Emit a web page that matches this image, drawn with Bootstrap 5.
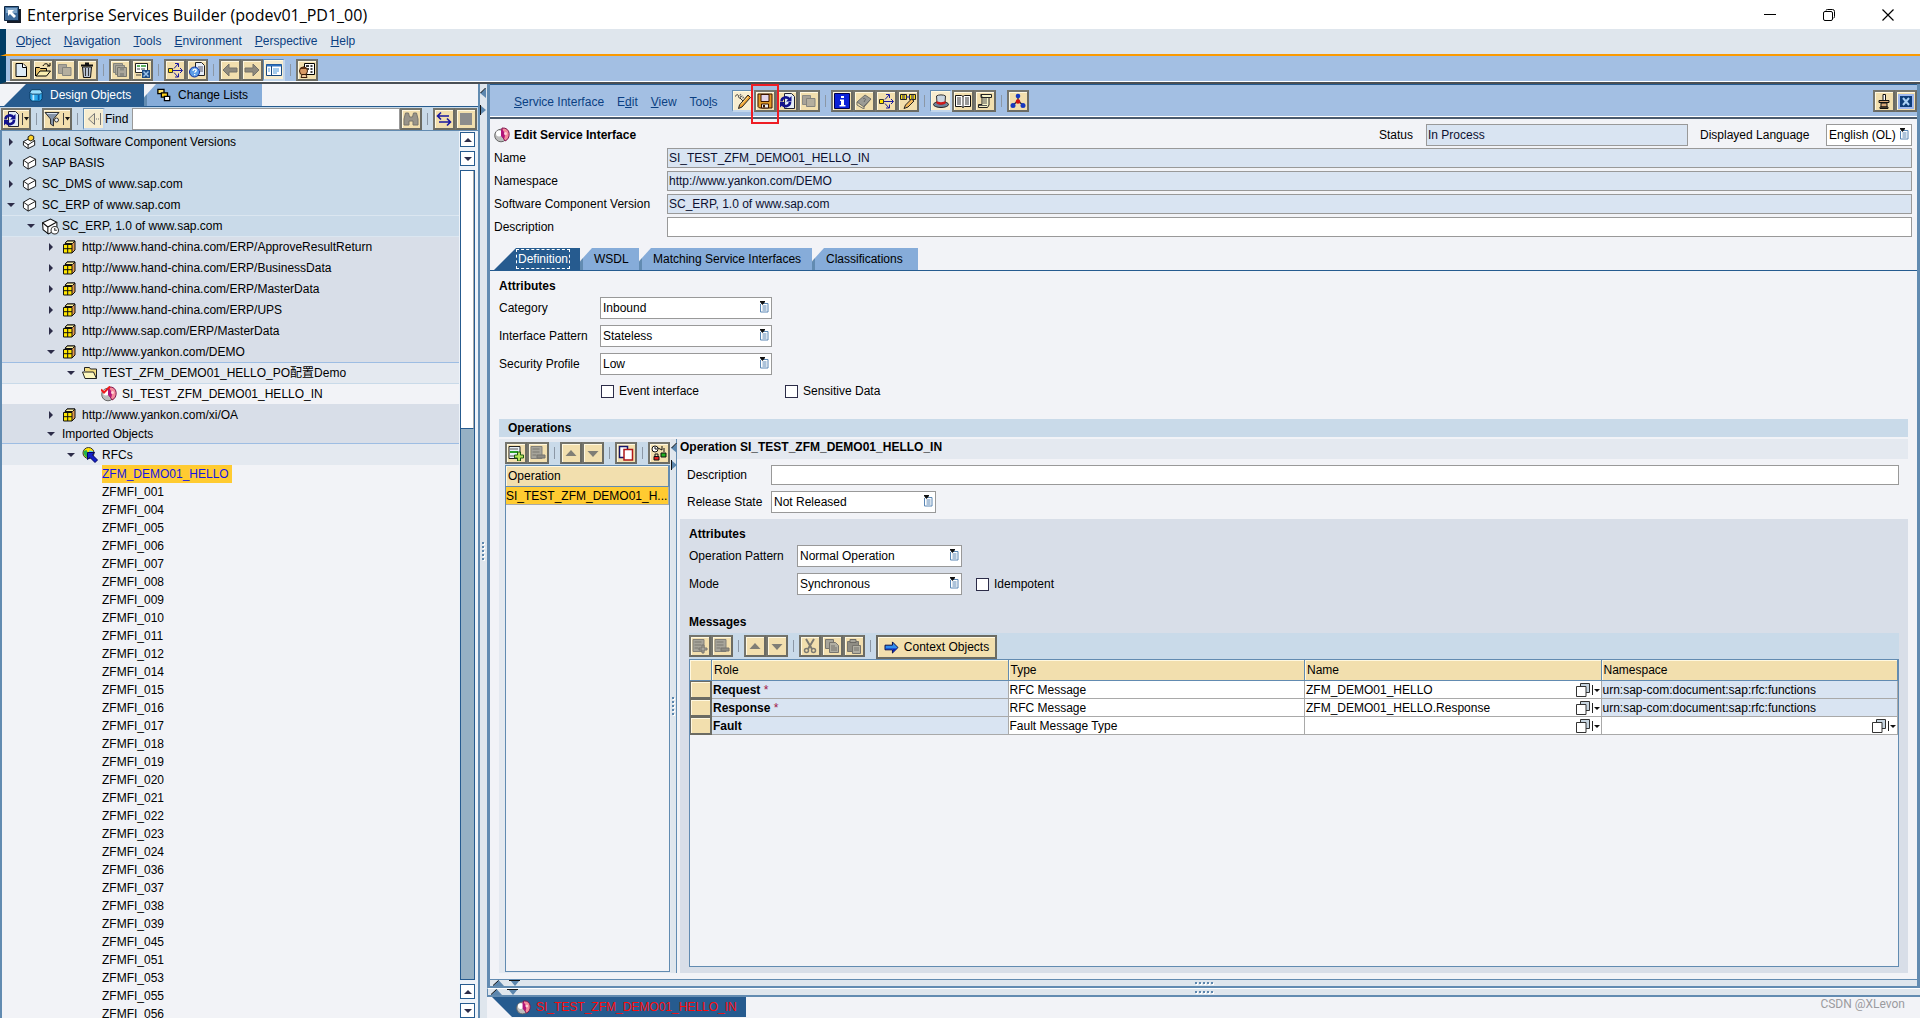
<!DOCTYPE html>
<html lang="en">
<head>
<meta charset="utf-8">
<meta name="viewport" content="width=device-width, initial-scale=1">
<title>Enterprise Services Builder</title>
<link href="https://cdn.jsdelivr.net/npm/bootstrap@5.3.0/dist/css/bootstrap.min.css" rel="stylesheet">
<style>
:root{--steel:#628bb1;--navy:#265b8f;--sky:#a3bfe3;--pale:#c9dae9;--mist:#dfe6ed;--paper:#f2f3f7;--fog:#e4e9f0;--dusk:#d8dee8;--sand:#f2dfae;--field:#d9e4f2}
body{font-family:"Liberation Sans","Noto Sans CJK SC",sans-serif;font-size:12px;line-height:16px;color:#000;background:var(--paper)}
svg{display:block;flex:none}
label,h2,h3{margin:0;font-size:12px;line-height:16px}
h2,h3{font-weight:700}
.titlebar{height:29px;background:#fff;padding:0 26px 0 4px}
.titlebar h1{font-family:"Open Sans",sans-serif;font-size:16px;line-height:24px;font-weight:400;margin:0 0 0 6px}
.wincontrols{gap:47px}
.wincontrols button{border:0;background:none;padding:0;width:12px;height:12px}
.menustrip{height:27px;background:var(--mist);border-left:6px solid #003c64;border-bottom:2px solid #fb9a02;padding:0 0 2px 10px;gap:13px}
.menulink{color:#0b3f82;text-decoration:none}
.menulink:hover{color:#000}
.mainbar{height:28px;background:var(--sky);border-left:6px solid #003c64;border-bottom:2px solid #4a4f55;box-shadow:inset 0 -1px #fff;padding:3px 0 0 4px;align-items:flex-start}
.tool{display:flex;align-items:center;justify-content:center;width:22px;height:22px;padding:0;border:2px solid #6b6b63;border-top-color:#75756d;border-left-color:#75756d;background:var(--sand);box-shadow:inset 1px 1px #fff8e0;flex:none}
.tool.wide{width:30px;gap:3px}
.tool.on{border-color:var(--steel) #c2d6ec #c2d6ec var(--steel);border-width:1px 2px 2px 1px;background:#f7edd0}
.tool:hover{background-color:#f9ebc5}
.rule{width:11px;height:22px;flex:none;display:flex;align-items:center;justify-content:center}
.rule::before{content:"";width:1px;height:12px;background:#8b97a5}
.sidepane{width:480px;flex:none;border-right:2px solid var(--steel)}
.tabstrip{display:flex;align-items:flex-end;border-bottom:1px solid var(--navy)}
.tabx{height:22px;border:0;padding:0;display:flex;align-items:center;gap:7px;color:#000;background:linear-gradient(to right,var(--steel) 3px,#86acd9 3px);clip-path:polygon(0 60%,12px 0,100% 0,100% 100%,0 100%)}
.tabx.current{color:#fff;background:var(--navy);clip-path:polygon(0 100%,22px 0,100% 0,100% 100%)}
.ring{outline:1px dashed #fff;outline-offset:1px}
.t-design{width:140px;padding-left:25px}.t-change{width:118px;padding-left:13px}
.t-def{width:86px;padding-left:24px}.t-wsdl{width:59px;padding-left:14px}.t-match{width:173px;padding-left:14px}.t-class{width:106px;padding-left:14px}
.sidebar-tools{height:24px;background:var(--pale);padding:1px 1px 0 1px;border-bottom:1px solid var(--steel)}
.treewrap{border-left:2px solid var(--steel)}
.tree{background:var(--paper);list-style:none;margin:0;padding:0;overflow:hidden}
.tree li{display:flex;align-items:center;height:21px;white-space:nowrap;background:var(--dusk)}
.tree .root{background:var(--pale)}
.tree .edge{border-top:1px solid #dbe6f0}
.tree .group{background:var(--fog);border-top:1px solid #9dbde3}
.tree .leaf{background:var(--paper);border-top:1px solid var(--pale)}
.tree .tight{height:18px}
.tree .tall{height:22px}
.tree .item{background:var(--paper);height:18px;padding-left:100px}
.l1{padding-left:20px}.l2{padding-left:40px}.l3{padding-left:60px}
.tree .leaf{padding-left:99px}
.twist{width:20px;flex:none;display:flex;justify-content:center;padding-right:3px}
.pic{width:20px;flex:none}
.leaf .pic{width:21px}
.picked{background:#ffcb31;color:#1414e6;padding:1px 3px 0 0;line-height:17px}
.vscroll{width:19px;background:#eef3f9;padding:1px 3px 0 1px;gap:4px;flex:none}
.vscroll button{width:15px;height:15px;border:1px solid var(--navy);background:#fff;padding:0;display:flex;align-items:center;justify-content:center;flex:none}
.track{border:1px solid var(--navy);background:#96b1c4}
.thumb{height:258px;background:#fff;border-bottom:1px solid var(--navy);border-right:1px solid #aaa}
.splitv{width:7px;background:var(--mist);flex:none}
.splitin{width:6px;background:var(--mist);border-right:1px solid var(--steel);flex:none}
.splitv,.splitin{position:relative;display:flex;align-items:center;justify-content:center}
.splitv .arrows,.splitin .arrows{position:absolute;left:0;top:4px}
.mainpane{border-left:3px solid var(--steel);border-right:3px solid var(--steel);background:var(--paper)}
.objbar{height:35px;background:var(--sky);border-top:1px solid var(--navy);border-bottom:2px solid #4a5a6c;box-shadow:inset 0 -1px #fff;padding:5px 0 0 24px}
.objmenu{gap:13px;height:24px;width:218px}
.redmark{position:absolute;left:-3px;top:-6px;width:28px;height:40px;border:2px solid #ee1c24;pointer-events:none;z-index:2}
.box{height:20px;border:1px solid #999;border-radius:0;background:#fff;padding:0 1px;font-size:12px;line-height:16px;color:#000;min-width:0}
.box.locked{background:var(--field);color:#0c1030}
.box.high{height:22px}
.drop{position:relative;height:22px}
.drop select{appearance:none;width:100%;height:22px;border:1px solid #999;border-radius:0;background:#fff;padding:0 14px 0 2px;font-size:12px;line-height:16px;color:#000}
.drop svg{position:absolute;right:3px;top:4px;pointer-events:none}
.head-form{padding:5px 5px 0 4px}
.head-form .line{display:flex;align-items:center;height:20px;margin-bottom:3px}
.head-form .first{height:22px;margin-bottom:2px}
.w-stat{width:47px}.w-statbox{width:262px}.w-lang{width:126px;margin-left:12px}.w-langbox{width:86px}
.lbl-a{width:173px}.lbl-b{width:101px}.lbl-c{width:84px}.lbl-d{width:108px}
.w-drop{width:172px}.w-drop2{width:165px}
.lower-tabs{margin-top:8px}
.defpane{padding:7px 9px 6px 9px}
.gap-s{margin-top:3px}.gap-m{margin-top:6px}.gap-l{margin-top:20px}
.ticks{padding-left:102px}
.tickbox{gap:5px}
.tickbox.first{width:184px}
.tickbox.side{margin-left:14px}
.tick{appearance:none;width:13px;height:13px;border:1px solid #2c2c48;background:#fff;margin:0;flex:none}
.tick:checked{background:#2c2c48}
.band{height:18px;background:var(--pale);padding:1px 9px}
.opsarea{background:var(--fog);margin-top:2px;padding-left:6px}
.oplist{width:166px;padding:3px 1px 1px 0;flex:none}
.opbar{background:var(--pale);height:23px}
.gridbox{border:1px solid var(--steel);background:var(--paper)}
.gridbox table{width:100%;table-layout:fixed;border-collapse:separate;border-spacing:0}
.gridbox th{height:21px;background:var(--sand);font-weight:400;padding:0 2px;border-bottom:1px solid var(--steel);border-right:1px solid var(--steel);box-shadow:inset 1px 1px #fff8e0}
.gridbox td{height:18px;padding:0 1px;border-bottom:1px solid #a9a9a9;border-right:1px solid #a9a9a9;background:#fff;white-space:nowrap;overflow:hidden;line-height:16px}
.gridbox td.ro{background:var(--field)}
.gridbox td.grip{background:var(--sand);border:2px solid #6b6b63;border-width:1px 2px 2px 1px;box-shadow:inset 1px 1px #fff8e0}
.gridbox td.chosen{background:#ffcb31;padding:0}
.gripcol{width:22px}
.star{color:#a01848}
.opdetail{background:var(--paper)}
.ophead{height:20px;background:var(--fog);padding:0 3px}
.opform{padding:6px 9px 6px 10px}
.duskpane{background:var(--dusk);padding:7px 9px 6px 9px;margin-left:3px}
.msghead{margin:19px 0 3px}
.msgbar{background:var(--pale);padding:2px 0;height:26px}
.ctxbtn{height:24px;width:121px;border:2px solid #6b6b63;background:var(--sand);box-shadow:inset 1px 1px #fff8e0;padding:0;display:flex;align-items:center;justify-content:center;gap:5px}
.splith{height:9px;background:var(--mist);border-top:1px solid #fff;border-bottom:2px solid var(--steel);padding-left:3px;display:flex;align-items:center;position:relative}
.splith.upper{border-top-color:var(--steel)}
.splith.lower{border-left:1px solid var(--steel)}
.splith .mid{position:absolute;left:50%;top:2px;margin-left:-10px}
.dock{padding-left:5px;height:21px}
.docktab{height:20px;width:254px;border:0;padding:0 0 0 24px;background:var(--navy);color:#ff0a0a;display:flex;align-items:center;gap:5px;clip-path:polygon(0 0,100% 0,100% 100%,20px 100%)}
.stamp{color:#9b9b9f;padding-right:15px;font-family:Roboto,sans-serif;font-size:12px;line-height:15px}
</style>
<script src="https://cdn.jsdelivr.net/npm/bootstrap@5.3.0/dist/js/bootstrap.bundle.min.js" defer></script>
</head>
<body class="d-flex flex-column vh-100 overflow-hidden">
<svg width="0" height="0" class="position-absolute" aria-hidden="true">
<defs>
<symbol id="new" viewBox="0 0 16 16"><path d="M3 1.500h7l3.500 3.500v9.500H3z" fill="#dceaf5" stroke="#000"/><path d="M9.500 1.500v4h4" fill="#fff" stroke="#000"/></symbol>
<symbol id="open" viewBox="0 0 16 16"><path d="M.5 14V5.500h4l1 1h6V9" fill="#e6c16a" stroke="#000"/><path d="M1 14l4-5h10.500l-4 5z" fill="#fbeeb0" stroke="#000"/><path d="M8 4c1-3 5-3 6 0m1-3v3h-3" fill="none" stroke="#000"/></symbol>
<symbol id="copyg" viewBox="0 0 16 16"><path d="M1.500 2.500h8v9h-8z" fill="#a8a398" stroke="#8b8b84"/><path d="M5.500 5.500h8.500v8H5.500z" fill="#b4ae9e" stroke="#84847e"/></symbol>
<symbol id="bin" viewBox="0 0 16 16"><path d="M3.500 5h9l-1 10.500h-7z" fill="#b9c3d2" stroke="#111"/><path d="M2 3.500h12M6 1.500h4" stroke="#111" stroke-width="2"/><path d="M6.500 6v8M9.500 6v8" stroke="#333"/></symbol>
<symbol id="saveall" viewBox="0 0 16 16"><path d="M1.500 1.500h9v9h-9z" fill="#aaa69b" stroke="#85857d"/><path d="M3.500 3.500h9v9h-9z" fill="#aaa69b" stroke="#85857d"/><path d="M5.500 5.500h9v9h-9z" fill="#aaa69b" stroke="#77776f"/><path d="M8 5.500h4v3H8zM8 11h4v3H8z" fill="#8b8b84"/></symbol>
<symbol id="listx" viewBox="0 0 16 16"><path d="M1.500 1.500h12v9h-12z" fill="#fff" stroke="#222"/><path d="M3 4h3m1 0h5" stroke="#2a9a2a" stroke-width="1.500"/><path d="M3 7h3m1 0h4M2 13h5" stroke="#444"/><path d="M8 8h8v8H8z" fill="#1d4d86"/><path d="M9.500 9.500l5 5m0-5l-5 5" stroke="#9cc3ea" stroke-width="1.500"/></symbol>
<symbol id="spread" viewBox="0 0 16 16"><path d="M1.500 6.500h4v4h-4z" fill="#ffe100" stroke="#333"/><path d="M6 8.500h9M13 6l2.500 2.500L13 11M7 6.500l4-4.500M8 1.500h3.500V5M7 10.500l4 4.500M8 15h3.500v-3.500" fill="none" stroke="#1a1aa0"/></symbol>
<symbol id="helpdoc" viewBox="0 0 16 16"><path d="M6.500.5h6l3 3v10h-9z" fill="#e6eef8" stroke="#222"/><path d="M9 5h5M10 7h4M11 9h3" stroke="#556"/><circle cx="5.500" cy="10" r="5" fill="#5c9ee8" stroke="#0e2fa0"/><path d="M4 9c0-2.500 3.500-2.500 3.200-.5-.2 1-1.500 1-1.500 2.300M5.700 12v1.300" fill="none" stroke="#fff" stroke-width="1.300"/></symbol>
<symbol id="back" viewBox="0 0 16 16"><path d="M1 8l6-6v4h8v4H7v4z" fill="#8e8a7e" stroke="#74726a"/></symbol>
<symbol id="fwd" viewBox="0 0 16 16"><path d="M15 8L9 2v4H1v4h8v4z" fill="#8e8a7e" stroke="#74726a"/></symbol>
<symbol id="panel" viewBox="0 0 16 16"><path d="M.5 2.500h15v11H.5z" fill="#fff" stroke="#17497f"/><path d="M.5 3.500h15" stroke="#2f72c0" stroke-width="2"/><path d="M5.500 4v9" stroke="#17497f"/><path d="M2 7h2M2 9h2M7 7h6M7 9h6M7 11h4" stroke="#4c9adb"/></symbol>
<symbol id="person" viewBox="0 0 16 16"><path d="M5.500 1.500h10v11h-10z" fill="#fff" stroke="#000"/><path d="M7 4h3M11.500 4h2M8 7h2M11.500 7h2M11.500 10h2" stroke="#000" stroke-width="1.500"/><circle cx="4.500" cy="9" r="4" fill="#d99a66" stroke="#3a1c08"/><path d="M1 7c1-3 6-3 7 0" fill="#5a2f12"/><path d="M2 15.500l1-3h4l1 3z" fill="#f2c9a0" stroke="#3a1c08"/></symbol>
<symbol id="db" viewBox="0 0 16 16"><path d="M3 2h10l2 4v6l-2 3H3l-2-3V6z" fill="#2aa7ea" stroke="#08365e"/><path d="M5 7v7" stroke="#bdeaff" stroke-width="2"/><path d="M3 2h10l2 3-2 2H3L1 5z" fill="#9ae0ff" stroke="#08365e"/><path d="M11 8v6" stroke="#0c5fa8" stroke-width="2"/></symbol>
<symbol id="stack" viewBox="0 0 16 16"><path d="M1 1.500h7v5H1z" fill="#ffe36a" stroke="#000" stroke-width="1.500"/><path d="M5 5.500h7v5H5z" fill="#ffd21a" stroke="#000" stroke-width="1.500"/><path d="M8.500 9.500h6v5h-6z" fill="#fff" stroke="#000" stroke-width="1.500"/></symbol>
<symbol id="refresh" viewBox="0 0 16 16"><path d="M5.500.5h7l3 3v12h-10z" fill="#e4edf7" stroke="#223"/><path d="M2.500 8.500c0-4.500 6-5.500 8-2" fill="none" stroke="#12128e" stroke-width="2.600"/><path d="M11 9c0 4.500-6 5.500-8 2" fill="none" stroke="#12128e" stroke-width="2.600"/><path d="M7 8.500h5.500V3zM6.500 9H1v5.500z" fill="#12128e"/></symbol>
<symbol id="funnel" viewBox="0 0 16 16"><path d="M1 1.500h14L9.500 8v7l-3-2V8z" fill="#8594a8" stroke="#333"/><path d="M3 2.500h10" stroke="#d6e2ef"/><circle cx="12.500" cy="9" r="2" fill="#e9eef4" stroke="#333"/></symbol>
<symbol id="more" viewBox="0 0 7 16"><path d="M.5 2v12" stroke="#444"/><path d="M2 6h5L4.500 9.500z" fill="#111"/></symbol>
<symbol id="collapse" viewBox="0 0 16 16"><path d="M8.500 2.500v11L2.500 8z" fill="#eee3c2" stroke="#777"/><path d="M10 8h3" stroke="#777" stroke-dasharray="1 1"/><path d="M14.500 2v12" stroke="#777"/></symbol>
<symbol id="binoc" viewBox="0 0 16 16"><path d="M1 14V8l1.500-6h3L6.500 6h3l1-4h3L15 8v6h-5v-4H6v4z" fill="#98948a" stroke="#77756d"/></symbol>
<symbol id="swap" viewBox="0 0 16 16"><path d="M1.500 5H13M5 1.500L1.500 5 5 8.500M14.500 11H3M11 7.500l3.500 3.500-3.500 3.500" fill="none" stroke="#1818a0" stroke-width="1.600"/></symbol>
<symbol id="stop" viewBox="0 0 16 16"><path d="M2 2h12v12H2z" fill="#8c8c8c"/></symbol>
<symbol id="right" viewBox="0 0 6 10"><path d="M1 1l4 4-4 4z" fill="#2c2c48"/></symbol>
<symbol id="down" viewBox="0 0 8 8"><path d="M0 2h8L4 6z" fill="#2c2c48"/></symbol>
<symbol id="up" viewBox="0 0 8 8"><path d="M0 6h8L4 2z" fill="#2c2c48"/></symbol>
<symbol id="cube" viewBox="0 0 16 16"><path d="M1.500 5.500L8.500 1.500l6 3v6.500l-8 4-5-3.500z" fill="#fff" stroke="#111"/><path d="M1.500 5.500l5 3.500 8-4.500M6.500 9v6" fill="none" stroke="#111"/></symbol>
<symbol id="cubes" viewBox="0 0 16 16"><path d="M1.500 8l7-3.500 5 2.500v5l-7 3.500-5-3.500z" fill="#fff" stroke="#111"/><path d="M1.500 8l5 3.500 7-4.500M6.500 11v4.500" fill="none" stroke="#111"/><path d="M6.500 3l3-2 3 1.500v3l-3 2-3-1.500z" fill="#ffd429" stroke="#111"/></symbol>
<symbol id="cubeclock" viewBox="0 0 16 16"><path d="M.5 4.500L8 1l6 3v7l-8 4-5-4z" fill="#fff" stroke="#111"/><path d="M.5 4.500l5 4 8-4.500M5.500 8.500V15" fill="none" stroke="#111"/><circle cx="12" cy="11.500" r="3.500" fill="#fff" stroke="#333"/><path d="M12 9.500v2h2" fill="none" stroke="#333"/></symbol>
<symbol id="ns" viewBox="0 0 14 14"><path d="M3 3l2-2h8v9l-3 3" fill="#e09a50" stroke="#111"/><path d="M3 3.500L5 1h8l-2.500 2.500z" fill="#fff3a0" stroke="#111"/><path d="M1.500 4.500h8.500v8.500H1.500z" fill="#ffe600" stroke="#111"/><path d="M5.700 4.500v8.500M1.500 8.700H10" stroke="#111"/></symbol>
<symbol id="folder" viewBox="0 0 16 14"><path d="M2.500 5V1.500h5l1 1.500h6v9.500" fill="#f4dd80" stroke="#222"/><path d="M.5 6h11l3 6.500H3z" fill="#fdf7be" stroke="#222"/></symbol>
<symbol id="iface" viewBox="0 0 16 16"><circle cx="7" cy="8.500" r="6.300" fill="#bdbdbd" stroke="#666"/><circle cx="5" cy="6.500" r="3" fill="#fff"/><path d="M8 1c9-1 9 11 3 13L8 9z" fill="#f58a9c" stroke="#80164e"/><path d="M7 1.500v7.500l3 3c1.500-3 1.500-7-3-10.500z" fill="#b2157a"/><circle cx="11.500" cy="6.500" r="1.500" fill="#ffd1d8"/></symbol>
<symbol id="rfc" viewBox="0 0 16 16"><circle cx="6.500" cy="6" r="5.500" fill="#ffe400" stroke="#333"/><path d="M1.500 4c0 4 2 6 4 7l1-4-2-4z" fill="#22b14c"/><path d="M7 3.500l4 .5-1 4H7z" fill="#5ac8f0"/><path d="M5.500 5.500h7l-2 2.500 5 5-2.500 2.500-5-5-2.500 2z" fill="#1420c8" stroke="#000060"/></symbol>
<symbol id="pencils" viewBox="0 0 16 16"><path d="M.5 3.500c1-3 3-2 3 0s2 2 2.500-.5M5 5l5 5" fill="none" stroke="#333"/><path d="M5 1.500l4 4" stroke="#666" stroke-width="2" stroke-dasharray="1 1"/><path d="M13 2l2.500 2.500L7 14l-3.500 1.500L4.500 12z" fill="#f0a030" stroke="#222"/><path d="M6 11.500L13 4" stroke="#ffe08a"/></symbol>
<symbol id="disk" viewBox="0 0 16 16"><path d="M1 1h14v14H2.500L1 13.500z" fill="#e09a28" stroke="#3a1500"/><path d="M4 1.500h8v7H4z" fill="#e3d6ea" stroke="#3a1500"/><path d="M4.500 11h7v4h-7z" fill="#eee" stroke="#3a1500"/><path d="M6 12h2v2.500H6z" fill="#3a1500"/></symbol>
<symbol id="info" viewBox="0 0 16 16"><path d="M.5.5h15v15H.5z" fill="#0a20d8" stroke="#000050"/><path d="M7 3h3v2H7zM6 6.500h4V12h1.500v1.500H5.500V12H7V8H6z" fill="#fff"/></symbol>
<symbol id="book" viewBox="0 0 16 16"><path d="M1 9l8-7 6 4-7 8z" fill="#9b9b95" stroke="#6f6f6a"/><path d="M1 9v3l7 4v-3l7-7" fill="none" stroke="#6f6f6a"/><path d="M7 6c1-1.500 3.500 0 2 1.200L8 9" fill="none" stroke="#666"/></symbol>
<symbol id="flow" viewBox="0 0 16 16"><path d="M.5 1.500h6v5h-6zM9.500 1.500h6v5h-6z" fill="#ffe100" stroke="#222"/><path d="M2 3h3M2 5h3M11 3h3M11 5h3M6 4h4" stroke="#1a1aa0"/><path d="M11.500 6L14 8l-6 6-4 1.500L5.500 12z" fill="#f4b95c" stroke="#222"/></symbol>
<symbol id="hat" viewBox="0 0 16 16"><ellipse cx="8" cy="11.500" rx="7.500" ry="3" fill="#6d8299" stroke="#222"/><path d="M4 10l-.5-7c1.500-1.500 7.500-1.500 9 0L12 10c-2 1.500-6 1.500-8 0z" fill="#c9d6e2" stroke="#333"/><path d="M3.500 8c2 1.500 7 1.500 9 0v2.500c-2 1.500-7 1.500-9 0z" fill="#d01818"/></symbol>
<symbol id="openbook" viewBox="0 0 16 16"><path d="M.5 2.500h6l1.500 1 1.500-1h6v11h-6L8 14.500l-1.500-1h-6z" fill="#fff" stroke="#111"/><path d="M8 3.500v11M2 5h4M2 7h4M2 9h4M2 11h4M10 5h4M10 7h4M10 9h4M10 11h4" stroke="#333"/></symbol>
<symbol id="scroll" viewBox="0 0 16 16"><path d="M4 1.500h10.500v3H12V12l-1.500 2.500h-9v-3H5V4z" fill="#f7f3c8" stroke="#222"/><path d="M6 6h4M6 8h4M6 10h4M2 12.500h8" stroke="#555"/><path d="M4 1.500v3h8" fill="none" stroke="#222"/></symbol>
<symbol id="mol" viewBox="0 0 16 16"><path d="M8 3v5l-5 4M8 8l5 4" fill="none" stroke="#223" stroke-width="1.300"/><circle cx="8" cy="3" r="2.300" fill="#1738c0"/><circle cx="3" cy="12.500" r="2.500" fill="#1738c0"/><circle cx="13" cy="12.500" r="2.500" fill="#1738c0"/><circle cx="8" cy="8.500" r="2.300" fill="#d01414"/></symbol>
<symbol id="pin" viewBox="0 0 16 16"><path d="M7 7V1.500h2.500V7" fill="#fff" stroke="#111"/><path d="M3 7.500h10v2H3zM5 10h6v4H5zM4 14h8v1.500H4z" fill="#d7a878" stroke="#111"/></symbol>
<symbol id="closex" viewBox="0 0 16 16"><path d="M1 2h14v13H1z" fill="#0d3c78" stroke="#9db8ee" stroke-width="2"/><path d="M5 5l6 7m0-7l-6 7" stroke="#a9d0f5" stroke-width="2"/></symbol>
<symbol id="listicon" viewBox="0 0 10 12"><path d="M2 2.500h7v8.500H1.500V3" fill="#fff" stroke="#5a86b4"/><path d="M3.500 5h4M3.500 7h4M3.500 9h4" stroke="#5a86b4"/><path d="M1 0h5v1L3.500 4 1 1z" fill="#111"/></symbol>
<symbol id="rowadd" viewBox="0 0 16 16"><path d="M1 1.500h11v12H1z" fill="#eaf2fa" stroke="#222"/><path d="M2 4h8M2 11h5" stroke="#555"/><path d="M2 7h8" stroke="#28a028" stroke-width="2"/><path d="M9.500 7h3v3h3v3h-3v3h-3v-3h-3v-3h3z" fill="#b6e25a" stroke="#1c5a10"/></symbol>
<symbol id="rowaddg" viewBox="0 0 16 16"><path d="M1 1.500h11v12H1z" fill="#a6a49a" stroke="#83817a"/><path d="M2.500 4h7M2.500 7h7M2.500 10h4" stroke="#7a7870"/><path d="M10 7h2v3h3v2h-3v3h-2v-3H7v-2h3z" fill="#a6a49a" stroke="#77756e"/></symbol>
<symbol id="rowdelg" viewBox="0 0 16 16"><path d="M1 1.500h11v12H1z" fill="#a6a49a" stroke="#83817a"/><path d="M2.500 4h7M2.500 7h7M2.500 10h4" stroke="#7a7870"/><path d="M7 10h8v3H7z" fill="#8f8d84" stroke="#77756e"/></symbol>
<symbol id="upg" viewBox="0 0 16 16"><path d="M2.500 11h11L8 5z" fill="#807e76"/></symbol>
<symbol id="downg" viewBox="0 0 16 16"><path d="M2.500 6h11L8 12z" fill="#807e76"/></symbol>
<symbol id="pages" viewBox="0 0 16 16"><path d="M1.500 1.500h8v11h-8z" fill="#fff" stroke="#15156a" stroke-width="1.500"/><path d="M6 4.500h8.500V15H6z" fill="#fff" stroke="#b01818" stroke-width="1.500"/></symbol>
<symbol id="balance" viewBox="0 0 16 16"><circle cx="4" cy="4" r="3" fill="#fff" stroke="#111"/><path d="M4 2v2h2M7 3l4 2M11 1v4M13 3v4" fill="none" stroke="#111"/><path d="M3 11.500h5v3.500H3z" fill="#e52020" stroke="#111"/><path d="M10 8h5v4h-5z" fill="#20b020" stroke="#111"/><path d="M4 11V9h3v2" fill="none" stroke="#111"/></symbol>
<symbol id="cutg" viewBox="0 0 16 16"><path d="M4 1l6 10M12 1L6 11" stroke="#7c7a72" stroke-width="2"/><circle cx="4.500" cy="12.500" r="2" fill="none" stroke="#7c7a72" stroke-width="1.500"/><circle cx="11.500" cy="12.500" r="2" fill="none" stroke="#7c7a72" stroke-width="1.500"/></symbol>
<symbol id="docsg" viewBox="0 0 16 16"><path d="M1.500 1.500h8v9h-8z" fill="#a6a49a" stroke="#77756e"/><path d="M5.500 4.500h6l3 3v7h-9z" fill="#b0aea2" stroke="#77756e"/><path d="M7 8h4M7 10h6M7 12h6" stroke="#77756e"/></symbol>
<symbol id="pasteg" viewBox="0 0 16 16"><path d="M1.500 3.500h11v10h-11z" fill="#8f8d84" stroke="#77756e"/><path d="M4 1.500h6v3H4z" fill="#a6a49a" stroke="#6c6a64"/><path d="M6.500 7.500h8v8h-8z" fill="#b0aea2" stroke="#77756e"/><path d="M8 10h5M8 12h5" stroke="#77756e"/></symbol>
<symbol id="bluearrow" viewBox="0 0 16 14"><path d="M1 4.500h8V1l6 6-6 6V9.500H1z" fill="#2f8df0" stroke="#000040"/><path d="M2 8h12L9.500 12V9H2z" fill="#0a22b8"/></symbol>
<symbol id="pick" viewBox="0 0 24 16"><path d="M4.500 1.500h9v9h-9z" fill="#c7d5e0" stroke="#333"/><path d="M.5 4.500h9.500v10H.5z" fill="#fff" stroke="#333"/><path d="M16.500 3v10" stroke="#222"/><path d="M18 7h6l-3 3z" fill="#111"/></symbol>
<symbol id="gl" viewBox="0 0 6 28"><path d="M6 0v10L0 5z" fill="#5c86ad"/><path d="M5.500 0L.5 5" stroke="#111"/><path d="M0 17v10l6-5z" fill="#5c86ad"/><path d="M.5 17v10" stroke="#111"/></symbol>
<symbol id="gh" viewBox="0 0 28 6"><path d="M0 6h11L5.500 0z" fill="#5c86ad"/><path d="M0 5.500L5.500.5" stroke="#111"/><path d="M17 0h10l-5 6z" fill="#5c86ad"/><path d="M16 .5h11" stroke="#111"/></symbol>
<symbol id="dv" viewBox="0 0 3 20"><path d="M2 2v18" stroke="#fff" stroke-width="2" stroke-dasharray="2 2"/><path d="M1 1v18" stroke="#5c86ad" stroke-width="2" stroke-dasharray="2 2"/></symbol>
<symbol id="dh" viewBox="0 0 20 3"><path d="M2 2h18" stroke="#fff" stroke-width="2" stroke-dasharray="2 2"/><path d="M1 1h18" stroke="#5c86ad" stroke-width="2" stroke-dasharray="2 2"/></symbol>
</defs>
</svg>

<header>
<div class="titlebar d-flex align-items-center">
<svg width="17" height="17" viewBox="0 0 17 17"><path d="M3 3h14v14H3z" fill="#151c28"/><path d="M.5.5h14v14H.5z" fill="#3f6c9b" stroke="#0f2742"/><path d="M2 2h11v5H2z" fill="#7fa5c8"/><path d="M4 4h6L8 6l4 4-2 2-4-4-2 2z" fill="#fff"/></svg>
<h1>Enterprise Services Builder (podev01_PD1_00)</h1>
<div class="wincontrols d-flex ms-auto">
<button aria-label="Minimize"><svg width="12" height="12" viewBox="0 0 12 12"><path d="M0 5.500h12" stroke="#000"/></svg></button>
<button aria-label="Restore"><svg width="12" height="12" viewBox="0 0 12 12"><rect x=".5" y="2.500" width="9" height="9" rx="1.500" fill="none" stroke="#000"/><path d="M3 1.500q0-1 1.500-1h5q2 0 2 2v5q0 1.500-1 1.500" fill="none" stroke="#000"/></svg></button>
<button aria-label="Close"><svg width="12" height="12" viewBox="0 0 12 12"><path d="M.5.5l11 11m0-11l-11 11" stroke="#000" stroke-width="1.200"/></svg></button>
</div>
</div>
<nav class="menustrip d-flex align-items-center">
<a class="menulink" href="#"><u>O</u>bject</a><a class="menulink" href="#"><u>N</u>avigation</a><a class="menulink" href="#"><u>T</u>ools</a><a class="menulink" href="#"><u>E</u>nvironment</a><a class="menulink" href="#"><u>P</u>erspective</a><a class="menulink" href="#"><u>H</u>elp</a>
</nav>
<div class="mainbar d-flex">
<button class="tool" aria-label="New"><svg width="16" height="16"><use href="#new"/></svg></button>
<button class="tool" aria-label="Open"><svg width="16" height="16"><use href="#open"/></svg></button>
<button class="tool" aria-label="Copy"><svg width="16" height="16"><use href="#copyg"/></svg></button>
<button class="tool" aria-label="Delete"><svg width="16" height="16"><use href="#bin"/></svg></button>
<span class="rule"></span>
<button class="tool" aria-label="Save all"><svg width="16" height="16"><use href="#saveall"/></svg></button>
<button class="tool" aria-label="Close all"><svg width="16" height="16"><use href="#listx"/></svg></button>
<span class="rule"></span>
<button class="tool" aria-label="Where used"><svg width="16" height="16"><use href="#spread"/></svg></button>
<button class="tool" aria-label="Help"><svg width="16" height="16"><use href="#helpdoc"/></svg></button>
<span class="rule"></span>
<button class="tool" aria-label="Back"><svg width="16" height="16"><use href="#back"/></svg></button>
<button class="tool" aria-label="Forward"><svg width="16" height="16"><use href="#fwd"/></svg></button>
<button class="tool on" aria-label="Navigation area"><svg width="16" height="16"><use href="#panel"/></svg></button>
<span class="rule"></span>
<button class="tool" aria-label="User settings"><svg width="16" height="16"><use href="#person"/></svg></button>
</div>
</header>

<div class="d-flex flex-fill overflow-hidden">
<aside class="sidepane d-flex flex-column overflow-hidden">
<div class="tabstrip ps-1">
<button class="tabx current t-design"><svg width="14" height="14"><use href="#db"/></svg>Design Objects</button>
<button class="tabx t-change"><svg width="14" height="14"><use href="#stack"/></svg>Change Lists</button>
</div>
<div class="sidebar-tools d-flex">
<button class="tool wide" aria-label="Refresh"><svg width="16" height="16"><use href="#refresh"/></svg><svg width="7" height="16"><use href="#more"/></svg></button>
<span class="rule"></span>
<button class="tool wide" aria-label="Filter"><svg width="16" height="16"><use href="#funnel"/></svg><svg width="7" height="16"><use href="#more"/></svg></button>
<span class="rule"></span>
<button class="tool on" aria-label="Hide search"><svg width="16" height="16"><use href="#collapse"/></svg></button>
<label for="find" class="align-self-center me-1">Find</label>
<input id="find" type="text" class="box high flex-fill">
<button class="tool" aria-label="Search"><svg width="16" height="16"><use href="#binoc"/></svg></button>
<span class="rule"></span>
<button class="tool" aria-label="Synchronize"><svg width="16" height="16"><use href="#swap"/></svg></button>
<button class="tool" aria-label="Stop"><svg width="16" height="16"><use href="#stop"/></svg></button>
</div>
<div class="treewrap d-flex flex-fill overflow-hidden">
<ul class="tree flex-fill">
<li class="root"><span class="twist"><svg width="6" height="10"><use href="#right"/></svg></span><span class="pic"><svg width="15" height="15"><use href="#cubes"/></svg></span>Local Software Component Versions</li>
<li class="root"><span class="twist"><svg width="6" height="10"><use href="#right"/></svg></span><span class="pic"><svg width="15" height="15"><use href="#cube"/></svg></span>SAP BASIS</li>
<li class="root"><span class="twist"><svg width="6" height="10"><use href="#right"/></svg></span><span class="pic"><svg width="15" height="15"><use href="#cube"/></svg></span>SC_DMS of www.sap.com</li>
<li class="root"><span class="twist"><svg width="8" height="8"><use href="#down"/></svg></span><span class="pic"><svg width="15" height="15"><use href="#cube"/></svg></span>SC_ERP of www.sap.com</li>
<li class="root edge l1"><span class="twist"><svg width="8" height="8"><use href="#down"/></svg></span><span class="pic"><svg width="17" height="17"><use href="#cubeclock"/></svg></span>SC_ERP, 1.0 of www.sap.com</li>
<li class="edge l2"><span class="twist"><svg width="6" height="10"><use href="#right"/></svg></span><span class="pic"><svg width="14" height="14"><use href="#ns"/></svg></span>http://www.hand-china.com/ERP/ApproveResultReturn</li>
<li class="l2"><span class="twist"><svg width="6" height="10"><use href="#right"/></svg></span><span class="pic"><svg width="14" height="14"><use href="#ns"/></svg></span>http://www.hand-china.com/ERP/BusinessData</li>
<li class="l2"><span class="twist"><svg width="6" height="10"><use href="#right"/></svg></span><span class="pic"><svg width="14" height="14"><use href="#ns"/></svg></span>http://www.hand-china.com/ERP/MasterData</li>
<li class="l2"><span class="twist"><svg width="6" height="10"><use href="#right"/></svg></span><span class="pic"><svg width="14" height="14"><use href="#ns"/></svg></span>http://www.hand-china.com/ERP/UPS</li>
<li class="l2"><span class="twist"><svg width="6" height="10"><use href="#right"/></svg></span><span class="pic"><svg width="14" height="14"><use href="#ns"/></svg></span>http://www.sap.com/ERP/MasterData</li>
<li class="l2"><span class="twist"><svg width="8" height="8"><use href="#down"/></svg></span><span class="pic"><svg width="14" height="14"><use href="#ns"/></svg></span>http://www.yankon.com/DEMO</li>
<li class="group l3"><span class="twist"><svg width="8" height="8"><use href="#down"/></svg></span><span class="pic"><svg width="16" height="14"><use href="#folder"/></svg></span>TEST_ZFM_DEMO01_HELLO_PO配置Demo</li>
<li class="leaf"><span class="pic"><svg width="16" height="16" viewBox="0 0 16 16"><use href="#iface"/><path d="M0 3.500l3 3L9 .5" fill="none" stroke="#ee1c1c" stroke-width="2"/></svg></span>SI_TEST_ZFM_DEMO01_HELLO_IN</li>
<li class="l2"><span class="twist"><svg width="6" height="10"><use href="#right"/></svg></span><span class="pic"><svg width="14" height="14"><use href="#ns"/></svg></span>http://www.yankon.com/xi/OA</li>
<li class="l2 tight"><span class="twist"><svg width="8" height="8"><use href="#down"/></svg></span>Imported Objects</li>
<li class="group l3 tall"><span class="twist"><svg width="8" height="8"><use href="#down"/></svg></span><span class="pic"><svg width="16" height="16"><use href="#rfc"/></svg></span>RFCs</li>
<li class="item"><span class="picked">ZFM_DEMO01_HELLO</span></li>
<li class="item">ZFMFI_001</li><li class="item">ZFMFI_004</li><li class="item">ZFMFI_005</li><li class="item">ZFMFI_006</li><li class="item">ZFMFI_007</li><li class="item">ZFMFI_008</li><li class="item">ZFMFI_009</li><li class="item">ZFMFI_010</li><li class="item">ZFMFI_011</li><li class="item">ZFMFI_012</li><li class="item">ZFMFI_014</li><li class="item">ZFMFI_015</li><li class="item">ZFMFI_016</li><li class="item">ZFMFI_017</li><li class="item">ZFMFI_018</li><li class="item">ZFMFI_019</li><li class="item">ZFMFI_020</li><li class="item">ZFMFI_021</li><li class="item">ZFMFI_022</li><li class="item">ZFMFI_023</li><li class="item">ZFMFI_024</li><li class="item">ZFMFI_036</li><li class="item">ZFMFI_037</li><li class="item">ZFMFI_038</li><li class="item">ZFMFI_039</li><li class="item">ZFMFI_045</li><li class="item">ZFMFI_051</li><li class="item">ZFMFI_053</li><li class="item">ZFMFI_055</li><li class="item">ZFMFI_056</li>
</ul>
<div class="vscroll d-flex flex-column">
<button aria-label="Up"><svg width="8" height="8"><use href="#up"/></svg></button>
<button aria-label="Down"><svg width="8" height="8"><use href="#down"/></svg></button>
<div class="track flex-fill"><div class="thumb"></div></div>
<button aria-label="Up"><svg width="8" height="8"><use href="#up"/></svg></button>
<button aria-label="Down"><svg width="8" height="8"><use href="#down"/></svg></button>
</div>
</div>
</aside>
<div class="splitv"><svg class="arrows" width="6" height="28"><use href="#gl"/></svg><svg width="3" height="20"><use href="#dv"/></svg></div>

<div class="d-flex flex-column flex-fill overflow-hidden">
<main class="mainpane d-flex flex-column flex-fill overflow-hidden">
<div class="objbar d-flex">
<nav class="objmenu d-flex align-items-center"><a class="menulink" href="#"><u>S</u>ervice Interface</a><a class="menulink" href="#">E<u>d</u>it</a><a class="menulink" href="#"><u>V</u>iew</a><a class="menulink" href="#">Too<u>l</u>s</a></nav>
<button class="tool on" aria-label="Display or change"><svg width="16" height="16"><use href="#pencils"/></svg></button>
<div class="position-relative"><button class="tool" aria-label="Save"><svg width="16" height="16"><use href="#disk"/></svg></button><span class="redmark"></span></div>
<button class="tool" aria-label="Refresh"><svg width="16" height="16"><use href="#refresh"/></svg></button>
<button class="tool" aria-label="Copy"><svg width="16" height="16"><use href="#copyg"/></svg></button>
<span class="rule"></span>
<button class="tool" aria-label="Information"><svg width="16" height="16"><use href="#info"/></svg></button>
<button class="tool" aria-label="Documentation"><svg width="16" height="16"><use href="#book"/></svg></button>
<button class="tool" aria-label="Where used"><svg width="16" height="16"><use href="#spread"/></svg></button>
<button class="tool" aria-label="Edit flow"><svg width="16" height="16"><use href="#flow"/></svg></button>
<span class="rule"></span>
<button class="tool on" aria-label="Header"><svg width="16" height="16"><use href="#hat"/></svg></button>
<button class="tool" aria-label="Details"><svg width="16" height="16"><use href="#openbook"/></svg></button>
<button class="tool" aria-label="Log"><svg width="16" height="16"><use href="#scroll"/></svg></button>
<span class="rule"></span>
<button class="tool" aria-label="Relations"><svg width="16" height="16"><use href="#mol"/></svg></button>
<div class="d-flex ms-auto"><button class="tool" aria-label="Pin"><svg width="16" height="16"><use href="#pin"/></svg></button><button class="tool" aria-label="Close"><svg width="16" height="16"><use href="#closex"/></svg></button></div>
</div>

<div class="head-form">
<div class="first d-flex align-items-center">
<svg width="16" height="16"><use href="#iface"/></svg><h2 class="ms-1">Edit Service Interface</h2>
<label for="status" class="ms-auto w-stat">Status</label><input id="status" class="box high locked w-statbox" value="In Process" readonly>
<label for="lang" class="w-lang">Displayed Language</label>
<div class="drop w-langbox"><select id="lang"><option>English (OL)</option></select><svg width="10" height="12"><use href="#listicon"/></svg></div>
</div>
<div class="line"><label class="lbl-a" for="nm">Name</label><input id="nm" class="box locked flex-fill" value="SI_TEST_ZFM_DEMO01_HELLO_IN" readonly></div>
<div class="line"><label class="lbl-a" for="nsp">Namespace</label><input id="nsp" class="box locked flex-fill" value="http://www.yankon.com/DEMO" readonly></div>
<div class="line"><label class="lbl-a" for="scv">Software Component Version</label><input id="scv" class="box locked flex-fill" value="SC_ERP, 1.0 of www.sap.com" readonly></div>
<div class="line"><label class="lbl-a" for="ds">Description</label><input id="ds" class="box flex-fill"></div>
</div>

<div class="tabstrip lower-tabs ps-1">
<button class="tabx current t-def"><span class="ring">Definition</span></button>
<button class="tabx t-wsdl">WSDL</button>
<button class="tabx t-match">Matching Service Interfaces</button>
<button class="tabx t-class">Classifications</button>
</div>

<div class="defpane d-flex flex-column flex-fill overflow-hidden">
<h3>Attributes</h3>
<div class="d-flex align-items-center gap-s"><label class="lbl-b" for="cat">Category</label><div class="drop w-drop"><select id="cat"><option>Inbound</option></select><svg width="10" height="12"><use href="#listicon"/></svg></div></div>
<div class="d-flex align-items-center gap-m"><label class="lbl-b" for="pat">Interface Pattern</label><div class="drop w-drop"><select id="pat"><option>Stateless</option></select><svg width="10" height="12"><use href="#listicon"/></svg></div></div>
<div class="d-flex align-items-center gap-m"><label class="lbl-b" for="sec">Security Profile</label><div class="drop w-drop"><select id="sec"><option>Low</option></select><svg width="10" height="12"><use href="#listicon"/></svg></div></div>
<div class="ticks d-flex mt-2"><div class="tickbox first d-flex align-items-center"><input class="tick" type="checkbox" id="ev"><label for="ev">Event interface</label></div><div class="tickbox d-flex align-items-center"><input class="tick" type="checkbox" id="sd"><label for="sd">Sensitive Data</label></div></div>
<div class="band gap-l"><h3>Operations</h3></div>

<div class="opsarea d-flex flex-fill overflow-hidden">
<div class="oplist d-flex flex-column">
<div class="opbar d-flex">
<button class="tool" aria-label="Insert operation"><svg width="16" height="16"><use href="#rowadd"/></svg></button><button class="tool" aria-label="Delete operation"><svg width="16" height="16"><use href="#rowdelg"/></svg></button>
<span class="rule"></span>
<button class="tool" aria-label="Move up"><svg width="16" height="16"><use href="#upg"/></svg></button><button class="tool" aria-label="Move down"><svg width="16" height="16"><use href="#downg"/></svg></button>
<span class="rule"></span>
<button class="tool" aria-label="Duplicate"><svg width="16" height="16"><use href="#pages"/></svg></button>
<span class="rule"></span>
<button class="tool" aria-label="Check"><svg width="16" height="16"><use href="#balance"/></svg></button>
</div>
<div class="gridbox flex-fill"><table><thead><tr><th>Operation</th></tr></thead><tbody><tr><td class="chosen">SI_TEST_ZFM_DEMO01_H...</td></tr></tbody></table></div>
</div>
<div class="splitin"><svg class="arrows" width="6" height="28"><use href="#gl"/></svg><svg width="3" height="20"><use href="#dv"/></svg></div>
<div class="opdetail d-flex flex-column flex-fill overflow-hidden">
<div class="ophead"><h3>Operation SI_TEST_ZFM_DEMO01_HELLO_IN</h3></div>
<div class="opform">
<div class="d-flex align-items-center"><label class="lbl-c" for="od">Description</label><input id="od" class="box flex-fill"></div>
<div class="d-flex align-items-center gap-m"><label class="lbl-c" for="rs">Release State</label><div class="drop w-drop2"><select id="rs"><option>Not Released</option></select><svg width="10" height="12"><use href="#listicon"/></svg></div></div>
</div>
<div class="duskpane d-flex flex-column flex-fill overflow-hidden">
<h3>Attributes</h3>
<div class="d-flex align-items-center gap-s"><label class="lbl-d" for="opn">Operation Pattern</label><div class="drop w-drop2"><select id="opn"><option>Normal Operation</option></select><svg width="10" height="12"><use href="#listicon"/></svg></div></div>
<div class="d-flex align-items-center gap-m"><label class="lbl-d" for="md">Mode</label><div class="drop w-drop2"><select id="md"><option>Synchronous</option></select><svg width="10" height="12"><use href="#listicon"/></svg></div><div class="tickbox side d-flex align-items-center"><input class="tick" type="checkbox" id="idm"><label for="idm">Idempotent</label></div></div>
<h3 class="msghead">Messages</h3>
<div class="msgbar d-flex">
<button class="tool" aria-label="Insert message"><svg width="16" height="16"><use href="#rowaddg"/></svg></button><button class="tool" aria-label="Delete message"><svg width="16" height="16"><use href="#rowdelg"/></svg></button>
<span class="rule"></span>
<button class="tool" aria-label="Move up"><svg width="16" height="16"><use href="#upg"/></svg></button><button class="tool" aria-label="Move down"><svg width="16" height="16"><use href="#downg"/></svg></button>
<span class="rule"></span>
<button class="tool" aria-label="Cut"><svg width="16" height="16"><use href="#cutg"/></svg></button><button class="tool" aria-label="Copy"><svg width="16" height="16"><use href="#docsg"/></svg></button><button class="tool" aria-label="Paste"><svg width="16" height="16"><use href="#pasteg"/></svg></button>
<span class="rule"></span>
<button class="ctxbtn"><svg width="15" height="13"><use href="#bluearrow"/></svg>Context Objects</button>
</div>
<div class="gridbox flex-fill"><table>
<colgroup><col class="gripcol"><col><col><col><col></colgroup>
<thead><tr><th></th><th>Role</th><th>Type</th><th>Name</th><th>Namespace</th></tr></thead>
<tbody>
<tr><td class="grip"></td><td class="ro"><b>Request</b> <span class="star">*</span></td><td>RFC Message</td><td><div class="d-flex align-items-center justify-content-between">ZFM_DEMO01_HELLO<svg width="24" height="16"><use href="#pick"/></svg></div></td><td class="ro">urn:sap-com:document:sap:rfc:functions</td></tr>
<tr><td class="grip"></td><td class="ro"><b>Response</b> <span class="star">*</span></td><td>RFC Message</td><td><div class="d-flex align-items-center justify-content-between">ZFM_DEMO01_HELLO.Response<svg width="24" height="16"><use href="#pick"/></svg></div></td><td class="ro">urn:sap-com:document:sap:rfc:functions</td></tr>
<tr><td class="grip"></td><td class="ro"><b>Fault</b></td><td>Fault Message Type</td><td><svg class="ms-auto" width="24" height="16"><use href="#pick"/></svg></td><td><svg class="ms-auto" width="24" height="16"><use href="#pick"/></svg></td></tr>
</tbody></table></div>
</div>
</div>
</div>
</div>
<div class="splith upper"><svg width="28" height="6"><use href="#gh"/></svg><svg class="mid" width="20" height="3"><use href="#dh"/></svg></div>
</main>
<div class="splith lower"><svg width="28" height="6"><use href="#gh"/></svg><svg class="mid" width="20" height="3"><use href="#dh"/></svg></div>
<footer class="dock d-flex justify-content-between"><button class="docktab"><svg width="15" height="15"><use href="#iface"/></svg>SI_TEST_ZFM_DEMO01_HELLO_IN</button><span class="stamp">CSDN @XLevon</span></footer>
</div>
</div>
</body>
</html>
